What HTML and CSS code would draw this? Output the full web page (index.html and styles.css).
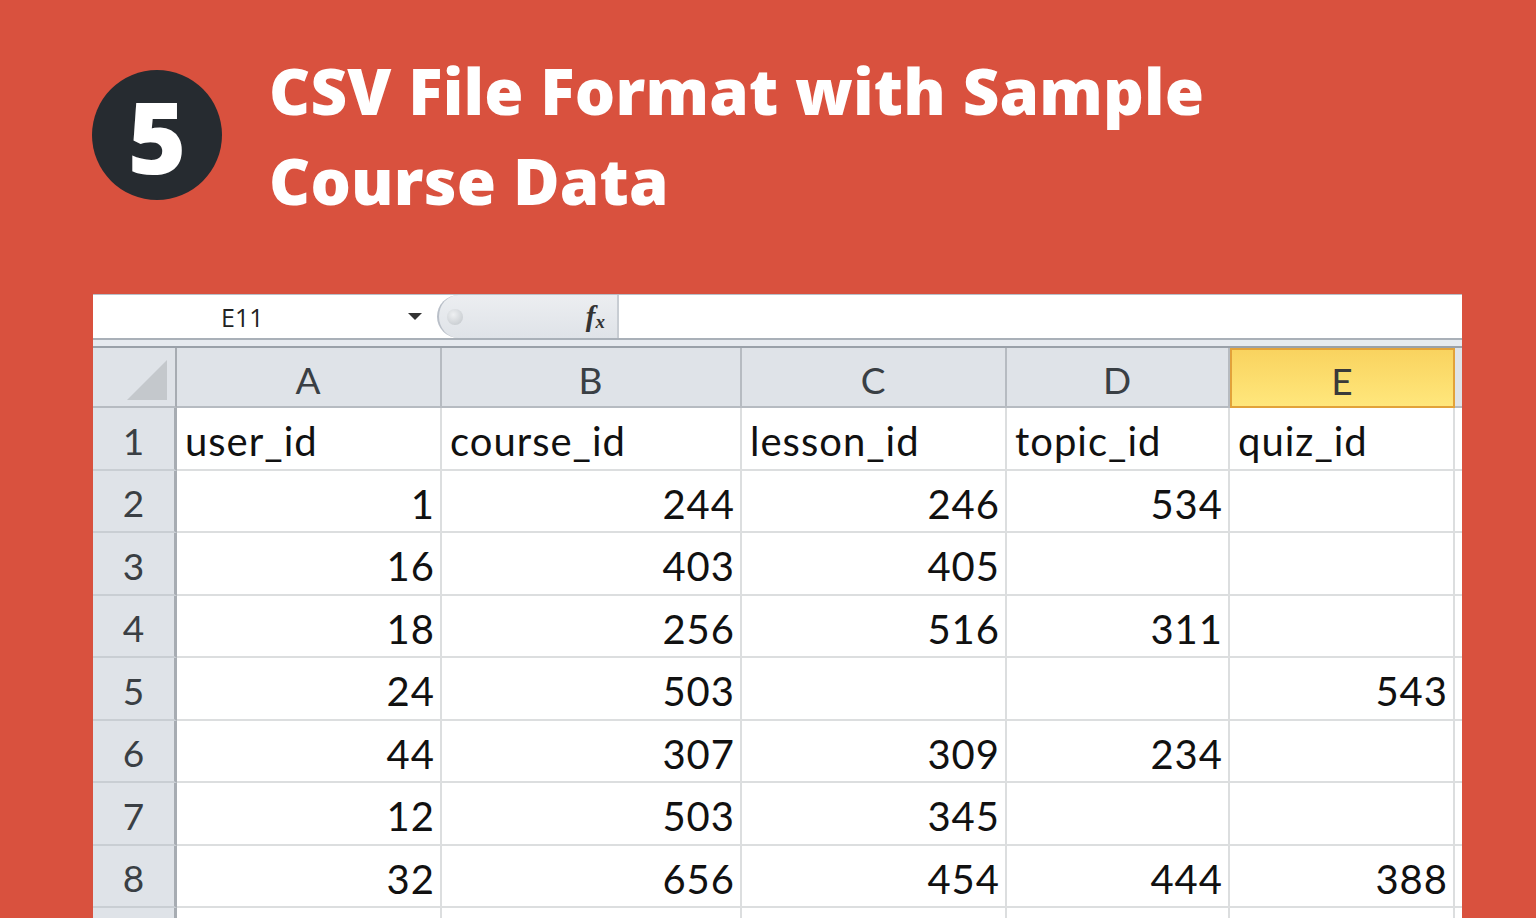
FILE: index.html
```html
<!DOCTYPE html>
<html>
<head>
<meta charset="utf-8">
<link rel="stylesheet" href="styles.css">
</head>
<body>
<div class="page">
  <header class="hero">
    <div class="badge">5</div>
    <h1 class="title">CSV File Format with Sample<br>Course Data</h1>
  </header>
  <section class="sheet">
    <div class="fbar">
      <div class="namebox"><span class="ref">E11</span><span class="arrow"></span></div>
      <div class="fxpill"><span class="dot"></span><span class="fx">f<sub>x</sub></span></div>
      <div class="finput"></div>
    </div>
    <div class="sep"></div>
    <div class="grid">
      <div class="corner"><span class="tri"></span></div>
      <div class="ch">A</div><div class="ch">B</div><div class="ch">C</div><div class="ch">D</div><div class="ch sel">E</div><div class="ch stub"></div>

      <div class="rh">1</div><div class="c l">user_id</div><div class="c l">course_id</div><div class="c l">lesson_id</div><div class="c l">topic_id</div><div class="c l">quiz_id</div><div class="c stub"></div>
      <div class="rh">2</div><div class="c">1</div><div class="c">244</div><div class="c">246</div><div class="c">534</div><div class="c"></div><div class="c stub"></div>
      <div class="rh">3</div><div class="c">16</div><div class="c">403</div><div class="c">405</div><div class="c"></div><div class="c"></div><div class="c stub"></div>
      <div class="rh">4</div><div class="c">18</div><div class="c">256</div><div class="c">516</div><div class="c">311</div><div class="c"></div><div class="c stub"></div>
      <div class="rh">5</div><div class="c">24</div><div class="c">503</div><div class="c"></div><div class="c"></div><div class="c">543</div><div class="c stub"></div>
      <div class="rh">6</div><div class="c">44</div><div class="c">307</div><div class="c">309</div><div class="c">234</div><div class="c"></div><div class="c stub"></div>
      <div class="rh">7</div><div class="c">12</div><div class="c">503</div><div class="c">345</div><div class="c"></div><div class="c"></div><div class="c stub"></div>
      <div class="rh">8</div><div class="c">32</div><div class="c">656</div><div class="c">454</div><div class="c">444</div><div class="c">388</div><div class="c stub"></div>
      <div class="rh"></div><div class="c"></div><div class="c"></div><div class="c"></div><div class="c"></div><div class="c"></div><div class="c stub"></div>
    </div>
  </section>
</div>
</body>
</html>
```

FILE: styles.css
```css
html, body {
  margin: 0;
  padding: 0;
}
body {
  background: #d9513e;
  width: 1536px;
  height: 918px;
  overflow: hidden;
}
.page {
  padding: 46px 0 0 92px;
}
.hero {
  display: flex;
  align-items: flex-start;
  height: 248px;
}
.badge {
  width: 130px;
  height: 130px;
  margin-top: 24px;
  border-radius: 50%;
  background: #262b30;
  color: #fff;
  font-family: "Open Sans", sans-serif;
  font-weight: 800;
  font-size: 100px;
  line-height: 130px;
  text-align: center;
  flex: none;
}
.title {
  margin: 0 0 0 47px;
  color: #fff;
  font-family: "Open Sans", sans-serif;
  font-weight: 800;
  font-size: 63.5px;
  line-height: 90px;
  letter-spacing: 0.2px;
}
.sheet {
  width: 1369px;
  margin-left: 1px;
  background: #fff;
  font-family: Lato, "Open Sans", sans-serif;
}
.fbar {
  display: flex;
  height: 43px;
  border-top: 1px solid #b9bfc8;
  background: #fff;
}
.namebox {
  width: 344px;
  display: flex;
  align-items: center;
}
.ref {
  margin-left: 128px;
  font-size: 25px;
  color: #222;
  font-family: "Open Sans", sans-serif;
}
.arrow {
  margin-left: 145px;
  width: 0;
  height: 0;
  border-left: 7px solid transparent;
  border-right: 7px solid transparent;
  border-top: 7px solid #333;
}
.fxpill {
  width: 182px;
  background: linear-gradient(#eceef1, #dfe3e8);
  border-radius: 24px 0 0 24px;
  border-left: 2px solid #b9bfc8;
  border-right: 2px solid #c8cdd3;
  display: flex;
  align-items: center;
  justify-content: space-between;
  padding: 0 12px 0 8px;
  box-sizing: border-box;
}
.dot {
  width: 16px;
  height: 16px;
  border-radius: 50%;
  background: radial-gradient(circle at 40% 35%, #eef0f2, #bfc4c9);
}
.fx {
  font-family: "Liberation Serif", serif;
  font-style: italic;
  font-weight: bold;
  font-size: 29px;
  color: #333;
}
.fx sub {
  font-size: 19px;
  vertical-align: -2px;
}
.finput {
  flex: 1;
}
.sep {
  height: 6px;
  border-top: 2px solid #a9b0b8;
  border-bottom: 2px solid #9aa1a9;
  background: #e6eaef;
}
.grid {
  display: grid;
  grid-template-columns: 84px 265px 300px 265px 223px 225px 7px;
  grid-template-rows: 60px repeat(9, 62.5px);
}
.corner, .ch, .rh {
  background: #dfe3e8;
  color: #3a3f44;
  box-sizing: border-box;
}
.corner {
  border-right: 2px solid #a7acb2;
  border-bottom: 2px solid #b6bbc1;
  position: relative;
}
.tri {
  position: absolute;
  right: 8px;
  bottom: 6px;
  width: 0;
  height: 0;
  border-left: 40px solid transparent;
  border-bottom: 40px solid #c4c8cc;
}
.ch {
  border-right: 2px solid #b6bbc1;
  border-bottom: 2px solid #b6bbc1;
  display: flex;
  align-items: center;
  justify-content: center;
  font-size: 37px;
  padding-top: 4px;
  letter-spacing: 1px;
}
.ch.sel {
  background: linear-gradient(#f9d35f, #ffe77c);
  border: 2px solid #e2a23a;
  color: #3a3a3a;
}
.ch.stub {
  border-right: none;
}
.rh {
  border-right: 3px solid #a7acb2;
  border-bottom: 2px solid #c9ced3;
  display: flex;
  align-items: center;
  justify-content: center;
  font-size: 37px;
  padding-top: 4px;
}
.c {
  box-sizing: border-box;
  border-right: 2px solid #dcdedf;
  border-bottom: 2px solid #dcdedf;
  display: flex;
  align-items: center;
  justify-content: flex-end;
  padding: 6px 5px 0 8px;
  font-size: 40px;
  letter-spacing: 1px;
  color: #111;
}
.c.l {
  justify-content: flex-start;
}
.c.stub {
  border-right: none;
  padding: 0;
}
```
